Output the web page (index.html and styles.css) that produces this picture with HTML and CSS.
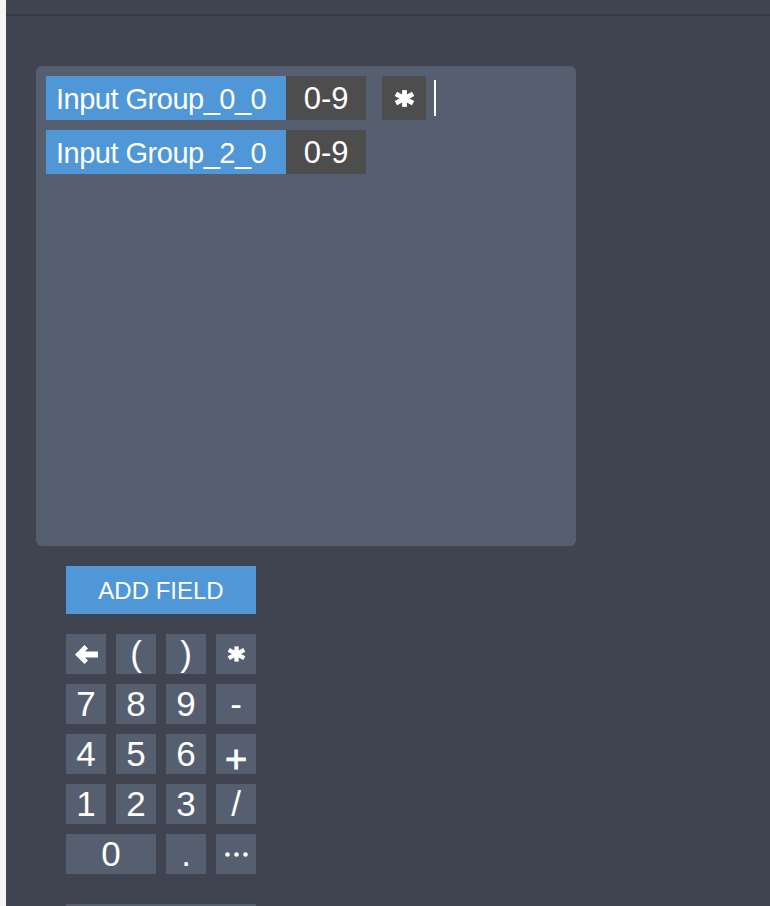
FILE: index.html
```html
<!DOCTYPE html>
<html>
<head>
<meta charset="utf-8">
<link rel="stylesheet" href="styles.css">
</head>
<body>
<div class="strip"></div>
<div class="main">
  <div class="topbar"></div>
  <div class="content">
    <div class="panel">
      <div class="field">
        <div class="label">Input Group_0_0</div>
        <div class="range">0-9</div>
        <div class="op">
          <svg width="21" height="17" viewBox="0 0 20 16"><g stroke="#fff" stroke-width="4.6"><line x1="10" y1="0" x2="10" y2="16"/><line x1="1.8" y1="3.6" x2="18.2" y2="12.4"/><line x1="1.8" y1="12.4" x2="18.2" y2="3.6"/></g></svg>
        </div>
        <div class="cursor"></div>
      </div>
      <div class="field">
        <div class="label">Input Group_2_0</div>
        <div class="range">0-9</div>
      </div>
    </div>
    <div class="controls">
      <div class="add-btn">ADD FIELD</div>
      <div class="keypad">
        <div class="key"><svg width="23" height="21" viewBox="0 0 23 21"><path d="M0 10.5 L9.5 1 L13 4.5 L10 7.5 L23 7.5 L23 13.5 L10 13.5 L13 16.5 L9.5 20 Z" fill="#fff"/></svg></div>
        <div class="key">(</div>
        <div class="key">)</div>
        <div class="key"><svg width="19" height="16" viewBox="0 0 20 16"><g stroke="#fff" stroke-width="4.6"><line x1="10" y1="0" x2="10" y2="16"/><line x1="1.8" y1="3.6" x2="18.2" y2="12.4"/><line x1="1.8" y1="12.4" x2="18.2" y2="3.6"/></g></svg></div>
        <div class="key">7</div>
        <div class="key">8</div>
        <div class="key">9</div>
        <div class="key">-</div>
        <div class="key">4</div>
        <div class="key">5</div>
        <div class="key">6</div>
        <div class="key plus">+</div>
        <div class="key">1</div>
        <div class="key">2</div>
        <div class="key">3</div>
        <div class="key">/</div>
        <div class="key wide">0</div>
        <div class="key">.</div>
        <div class="key"><svg width="23" height="5" viewBox="0 0 23 5"><g fill="#fff"><circle cx="2.5" cy="2.5" r="2.3"/><circle cx="11.5" cy="2.5" r="2.3"/><circle cx="20.5" cy="2.5" r="2.3"/></g></svg></div>
      </div>
      <div class="next-block"></div>
    </div>
  </div>
</div>
</body>
</html>
```
FILE: styles.css
```css
html, body {
  margin: 0;
  padding: 0;
  height: 100%;
  overflow: hidden;
}
body {
  display: flex;
  background: #3f4450;
  font-family: "Liberation Sans", Arial, sans-serif;
  color: #fff;
}
.strip {
  width: 6px;
  background: #f5f5f5;
  flex: none;
}
.main {
  flex: 1;
  display: flex;
  flex-direction: column;
}
.topbar {
  height: 14px;
  border-bottom: 2px solid #353a43;
  flex: none;
}
.content {
  padding: 50px 0 0 30px;
}
.panel {
  width: 540px;
  height: 480px;
  box-sizing: border-box;
  background: #565f70;
  border-radius: 6px;
  padding: 10px;
  display: flex;
  flex-direction: column;
  gap: 10px;
}
.field {
  display: flex;
  align-items: center;
  height: 44px;
}
.label {
  background: #4f97d7;
  height: 44px;
  line-height: 46px;
  padding: 0 20px 0 10px;
  font-size: 29px;
  letter-spacing: -0.5px;
  white-space: nowrap;
}
.range {
  background: #4d4d4d;
  width: 80px;
  height: 44px;
  line-height: 46px;
  text-align: center;
  font-size: 31px;
}
.op {
  background: #4d4d4d;
  width: 44px;
  height: 44px;
  margin-left: 16px;
  display: flex;
  align-items: center;
  justify-content: center;
}
.cursor {
  width: 2px;
  height: 36px;
  background: #fff;
  margin-left: 8px;
}
.controls {
  padding-left: 30px;
  padding-top: 20px;
}
.add-btn {
  width: 190px;
  height: 48px;
  line-height: 50px;
  background: #4f97d7;
  text-align: center;
  font-size: 24px;
}
.keypad {
  margin-top: 20px;
  display: grid;
  grid-template-columns: repeat(4, 40px);
  grid-auto-rows: 40px;
  gap: 10px;
}
.key {
  background: #565f70;
  font-size: 35px;
  line-height: 40px;
  text-align: center;
  display: flex;
  align-items: center;
  justify-content: center;
}
.key.plus {
  padding-top: 10px;
  box-sizing: border-box;
  font-size: 38px;
  -webkit-text-stroke: 0.8px #fff;
}
.key.wide {
  grid-column: span 2;
}
.next-block {
  margin-top: 30px;
  width: 190px;
  height: 40px;
  background: #565f70;
}
```
